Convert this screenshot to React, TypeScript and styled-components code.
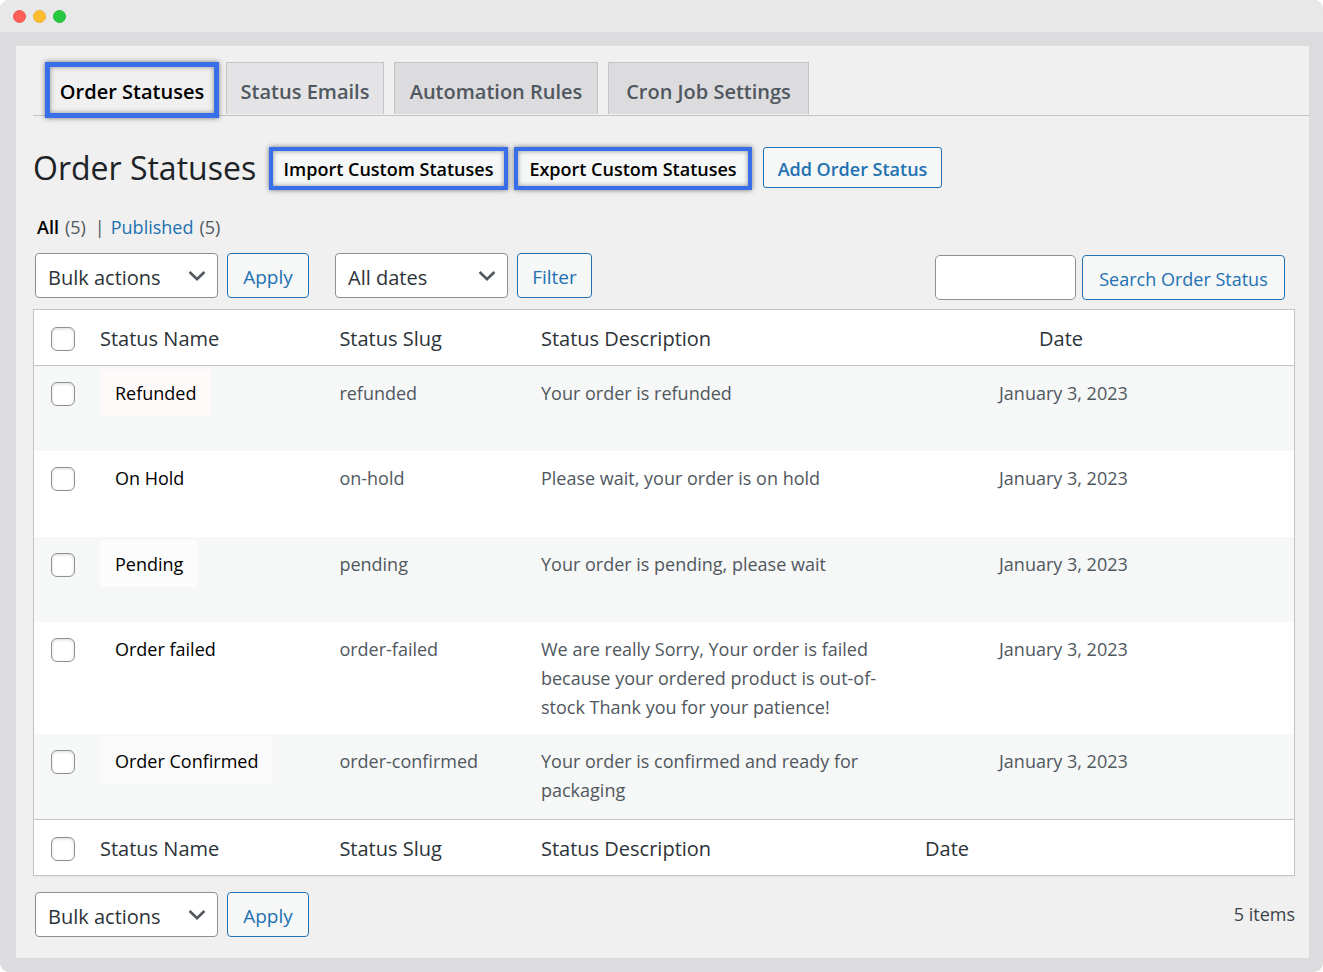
import React from "react";
import styled, { createGlobalStyle, css } from "styled-components";

const GlobalStyle = createGlobalStyle`
  *, *::before, *::after { box-sizing: border-box; }
  body {
    margin: 0;
    background: #fff;
    color: #50575e;
    font-family: "Segoe UI", "Open Sans", "Noto Sans", sans-serif;
    font-size: 18px;
    line-height: 29px;
  }
  button, input, select { font: inherit; color: inherit; margin: 0; }
`;

const Window = styled.div`
  min-height: 100vh;
  display: flex;
  flex-direction: column;
  background: #dcdcde;
  border-radius: 9px;
  overflow: hidden;
`;

const TitleBar = styled.div`
  display: flex;
  align-items: center;
  gap: 7px;
  height: 32px;
  padding: 1px 13px 0;
  background: #e8e8e8;
`;

const Light = styled.span<{ $color: string; $edge: string }>`
  width: 13px;
  height: 13px;
  border-radius: 50%;
  background: ${(p) => p.$color};
  border: 1px solid ${(p) => p.$edge};
`;

const Panel = styled.main`
  flex: 1;
  margin: 14px 14px 14px 16px;
  padding: 16px 0 21px 17px;
  background: #f0f0f0;
`;

const Tabs = styled.nav`
  display: flex;
  align-items: flex-start;
  height: 54px;
  padding-left: 12px;
  border-bottom: 1px solid #c3c4c7;
`;

const highlight = css`
  border-color: #386ee8;
  border-style: solid;
  box-shadow: 0 0 5px rgba(0, 0, 0, 0.5), inset 0 0 5px rgba(0, 0, 0, 0.4);
  color: #000;
`;

const Tab = styled.a<{ $width: number; $active?: boolean; $light?: boolean }>`
  display: flex;
  align-items: center;
  justify-content: center;
  min-width: ${(p) => p.$width}px;
  height: 52px;
  margin-right: 10px;
  padding-top: 5px;
  border: 1px solid #c3c4c7;
  border-bottom: 0;
  background: ${(p) => (p.$light ? "#e4e4e6" : "#dcdcde")};
  color: #50575e;
  font-size: 20px;
  font-weight: 600;
  text-decoration: none;
  white-space: nowrap;
  ${(p) =>
    p.$active &&
    css`
      ${highlight}
      position: relative;
      height: 56px;
      margin-right: 7px;
      padding-top: 2px;
      border-width: 5px;
      background: #f0f0f0;
    `}
`;

const Content = styled.div`
  padding-right: 14px;
`;

const HeadingRow = styled.div`
  display: flex;
  align-items: flex-start;
  margin-top: 31px;
`;

const Title = styled.h1`
  width: 236px;
  margin: 0;
  color: #1d2327;
  font-size: 32px;
  font-weight: 400;
  line-height: 42px;
  white-space: nowrap;
`;

const PageAction = styled.button<{ $width: number; $marked?: boolean }>`
  min-width: ${(p) => p.$width}px;
  height: 41px;
  margin-right: 11px;
  padding: 3px 8px 0;
  border: 1px solid #2271b1;
  border-radius: 3px;
  background: #f6f7f7;
  color: #2271b1;
  font-weight: 600;
  white-space: nowrap;
  ${(p) =>
    p.$marked &&
    css`
      ${highlight}
      height: 43px;
      padding-top: 2px;
      border-width: 4px;
      border-radius: 0;
    `}
  &:first-of-type { margin-right: 6px; }
`;

const Views = styled.div`
  display: flex;
  gap: 6px;
  margin-top: 23px;
  padding-left: 4px;
`;

const ViewLink = styled.a<{ $current?: boolean }>`
  color: ${(p) => (p.$current ? "#000" : "#2271b1")};
  font-weight: ${(p) => (p.$current ? 600 : 400)};
  text-decoration: none;
`;

const Divider = styled.span`
  margin-left: 3px;
`;

const Toolbar = styled.div`
  display: flex;
  align-items: center;
  padding-left: 2px;
`;

const TopToolbar = styled(Toolbar)`
  align-items: flex-start;
  margin: 11px 0 9px;
  padding-right: 10px;
`;

const BottomToolbar = styled(Toolbar)`
  margin-top: 16px;
`;

const SelectBox = styled.div<{ $width: number }>`
  position: relative;
  width: ${(p) => p.$width}px;
  margin-right: 9px;

  select {
    width: 100%;
    height: 45px;
    padding: 3px 40px 0 12px;
    appearance: none;
    border: 1px solid #8c8f94;
    border-radius: 4px;
    background: #fff;
    color: #2c3338;
    font-size: 20px;
  }
  svg {
    position: absolute;
    right: 11px;
    top: 13px;
    pointer-events: none;
  }
`;

const Button = styled.button<{ $width: number }>`
  min-width: ${(p) => p.$width}px;
  height: 45px;
  padding: 3px 12px 0;
  border: 1px solid #2271b1;
  border-radius: 4px;
  background: #f6f7f7;
  color: #2271b1;
  font-size: 19px;
  white-space: nowrap;
`;

const SearchButton = styled(Button)`
  font-size: 18px;
`;

const FilterGroup = styled.div`
  display: flex;
  margin-left: 26px;
`;

const SearchForm = styled.form`
  display: flex;
  gap: 6px;
  margin: 2px 0 0 auto;
`;

const SearchInput = styled.input`
  width: 141px;
  height: 45px;
  padding: 0 8px;
  border: 1px solid #8c8f94;
  border-radius: 5px;
  background: #fff;
`;

const ItemCount = styled.span`
  margin-left: auto;
  color: #3c434a;
`;

const Table = styled.table`
  width: 100%;
  table-layout: fixed;
  border: 1px solid #c3c4c7;
  border-collapse: separate;
  border-spacing: 0;
  background: #fff;
  box-shadow: 0 1px 1px rgba(0, 0, 0, 0.04);
`;

const Col = styled.col<{ $width?: string }>`
  width: ${(p) => p.$width ?? "auto"};
`;

const HeadCell = styled.th<{ $indent?: number }>`
  height: 56px;
  padding: 2px 0 0 ${(p) => p.$indent ?? 10}px;
  color: #2c3338;
  font-size: 20px;
  font-weight: 400;
  text-align: left;
  thead & { border-bottom: 1px solid #c3c4c7; }
  tfoot & { border-top: 1px solid #c3c4c7; }
`;

const Row = styled.tr`
  height: 85px;
  vertical-align: top;
  &:nth-child(odd) { background: #f6f7f7; }
  &:nth-child(even) { height: 86px; }
`;

const Cell = styled.td<{ $indent?: number }>`
  padding: 13px 10px 12px ${(p) => p.$indent ?? 10}px;
`;

const NameCell = styled(Cell)`
  padding: 3px 0 0 10px;
`;

const CheckCell = styled(Cell)`
  padding: 16px 0 0 17px;
`;

const Badge = styled.span<{ $color: string }>`
  display: inline-block;
  padding: 1px 15px 0;
  border-radius: 4px;
  background: ${(p) => p.$color};
  color: #000;
  line-height: 46px;
  white-space: nowrap;
`;

const Checkbox = styled.input`
  display: block;
  width: 24px;
  height: 24px;
  appearance: none;
  border: 1px solid #8c8f94;
  border-radius: 6px;
  background: #fff;
  box-shadow: inset 0 1px 3px rgba(0, 0, 0, 0.15);
  &:checked { background: #2271b1; }
`;

const statuses = [
  { name: "Refunded", slug: "refunded", text: "Your order is refunded", color: "#fffafa" },
  { name: "On Hold", slug: "on-hold", text: "Please wait, your order is on hold", color: "#fff" },
  { name: "Pending", slug: "pending", text: "Your order is pending, please wait", color: "#fcfcfc" },
  {
    name: "Order failed",
    slug: "order-failed",
    text: "We are really Sorry, Your order is failed because your ordered product is out-of-stock Thank you for your patience!",
    color: "#fff",
  },
  { name: "Order Confirmed", slug: "order-confirmed", text: "Your order is confirmed and ready for packaging", color: "#fafafa" },
];

function Dropdown({ label, option, width }: { label: string; option: string; width: number }) {
  return (
    <SelectBox $width={width}>
      <select aria-label={label}>
        <option>{option}</option>
      </select>
      <svg width="20" height="20" viewBox="0 0 20 20" fill="none" stroke="#50575e" strokeWidth="2.6">
        <path d="M2.6 6 L10 13.2 L17.4 6" />
      </svg>
    </SelectBox>
  );
}

function HeadingCells({ position, dateIndent }: { position: string; dateIndent: number }) {
  return (
    <tr>
      <HeadCell $indent={17}>
        <Checkbox type="checkbox" aria-label={`Select all, ${position}`} />
      </HeadCell>
      <HeadCell>Status Name</HeadCell>
      <HeadCell>Status Slug</HeadCell>
      <HeadCell>Status Description</HeadCell>
      <HeadCell $indent={dateIndent}>Date</HeadCell>
    </tr>
  );
}

export default function App() {
  return (
    <>
      <GlobalStyle />
      <Window>
        <TitleBar>
          <Light $color="#ff5f57" $edge="#f2564f" />
          <Light $color="#febc2e" $edge="#eeb02c" />
          <Light $color="#28c840" $edge="#22b93a" />
        </TitleBar>
        <Panel>
          <Tabs>
            <Tab href="#statuses" $width={174} $active>Order Statuses</Tab>
            <Tab href="#emails" $width={158} $light>Status Emails</Tab>
            <Tab href="#rules" $width={204}>Automation Rules</Tab>
            <Tab href="#cron" $width={201}>Cron Job Settings</Tab>
          </Tabs>
          <Content>
            <HeadingRow>
              <Title>Order Statuses</Title>
              <PageAction type="button" $width={239} $marked>Import Custom Statuses</PageAction>
              <PageAction type="button" $width={238} $marked>Export Custom Statuses</PageAction>
              <PageAction type="button" $width={179}>Add Order Status</PageAction>
            </HeadingRow>
            <Views>
              <ViewLink href="#all" $current>All</ViewLink>
              <span>(5)</span>
              <Divider>|</Divider>
              <ViewLink href="#published">Published</ViewLink>
              <span>(5)</span>
            </Views>
            <TopToolbar>
              <Dropdown label="Bulk actions" option="Bulk actions" width={183} />
              <Button type="button" $width={82}>Apply</Button>
              <FilterGroup>
                <Dropdown label="Filter by date" option="All dates" width={173} />
                <Button type="button" $width={75}>Filter</Button>
              </FilterGroup>
              <SearchForm onSubmit={(e) => e.preventDefault()}>
                <SearchInput type="search" aria-label="Search Order Status" />
                <SearchButton type="submit" $width={203}>Search Order Status</SearchButton>
              </SearchForm>
            </TopToolbar>
            <Table>
              <colgroup>
                <Col $width="56px" />
                <Col $width="19%" />
                <Col $width="16%" />
                <Col />
                <Col $width="30%" />
              </colgroup>
              <thead>
                <HeadingCells position="top" dateIndent={123} />
              </thead>
              <tbody>
                {statuses.map((s) => (
                  <Row key={s.slug}>
                    <CheckCell>
                      <Checkbox type="checkbox" aria-label={`Select ${s.name}`} />
                    </CheckCell>
                    <NameCell>
                      <Badge $color={s.color}>{s.name}</Badge>
                    </NameCell>
                    <Cell>{s.slug}</Cell>
                    <Cell>{s.text}</Cell>
                    <Cell $indent={83}>January 3, 2023</Cell>
                  </Row>
                ))}
              </tbody>
              <tfoot>
                <HeadingCells position="bottom" dateIndent={9} />
              </tfoot>
            </Table>
            <BottomToolbar>
              <Dropdown label="Bulk actions, bottom" option="Bulk actions" width={183} />
              <Button type="button" $width={82}>Apply</Button>
              <ItemCount>5 items</ItemCount>
            </BottomToolbar>
          </Content>
        </Panel>
      </Window>
    </>
  );
}
